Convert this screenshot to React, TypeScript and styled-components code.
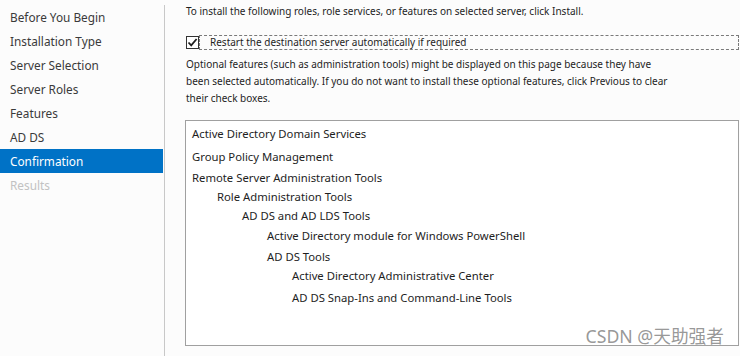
import React from 'react';
import styled, { createGlobalStyle } from 'styled-components';

const GlobalStyle = createGlobalStyle`
  html, body {
    margin: 0;
    padding: 0;
    background: #fcfcfc;
  }
  body {
    font-family: "Noto Sans", "Open Sans", sans-serif;
    font-size: 12px;
    color: #1e1e1e;
  }
`;

const steps = [
  { label: 'Before You Begin' },
  { label: 'Installation Type' },
  { label: 'Server Selection' },
  { label: 'Server Roles' },
  { label: 'Features' },
  { label: 'AD DS' },
  { label: 'Confirmation', active: true },
  { label: 'Results', disabled: true },
];

// h = distance to the next row
const features = [
  { text: 'Active Directory Domain Services', level: 0, h: 23 },
  { text: 'Group Policy Management', level: 0, h: 21 },
  { text: 'Remote Server Administration Tools', level: 0, h: 19 },
  { text: 'Role Administration Tools', level: 1, h: 19 },
  { text: 'AD DS and AD LDS Tools', level: 2, h: 20 },
  { text: 'Active Directory module for Windows PowerShell', level: 3, h: 21 },
  { text: 'AD DS Tools', level: 3, h: 19 },
  { text: 'Active Directory Administrative Center', level: 4, h: 22 },
  { text: 'AD DS Snap-Ins and Command-Line Tools', level: 4, h: 22 },
];

export default function App() {
  return (
    <>
      <GlobalStyle />
      <Page>
        <Sidebar>
          {steps.map((s) => (
            <Step key={s.label} $active={s.active} $disabled={s.disabled}>
              {s.label}
            </Step>
          ))}
        </Sidebar>
        <Content>
          <Intro>
            To install the following roles, role services, or features on selected server, click Install.
          </Intro>
          <CheckRow>
            <CheckBox>
              <svg width="11" height="11" viewBox="0 0 11 11">
                <path d="M1.5 5.5 L4.2 8.3 L9.6 2" fill="none" stroke="#1e1e1e" strokeWidth="1.8" />
              </svg>
            </CheckBox>
            <FocusLabel>Restart the destination server automatically if required</FocusLabel>
          </CheckRow>
          <Note>
            Optional features (such as administration tools) might be displayed on this page because they have
            <br />
            been selected automatically. If you do not want to install these optional features, click Previous to clear
            <br />
            their check boxes.
          </Note>
          <ListBox>
            {features.map((f) => (
              <FeatureRow key={f.text} $level={f.level} $h={f.h}>
                {f.text}
              </FeatureRow>
            ))}
          </ListBox>
        </Content>
        <Watermark>CSDN @天助强者</Watermark>
      </Page>
    </>
  );
}

const Page = styled.div`
  position: relative;
  display: flex;
  width: 740px;
  height: 356px;
  overflow: hidden;
  background: #fcfcfc;
`;

const Sidebar = styled.nav`
  width: 164px;
  flex-shrink: 0;
  padding-top: 5px;
  display: flex;
  flex-direction: column;
  position: relative;
  &::after {
    content: '';
    position: absolute;
    right: -1px;
    top: 5px;
    bottom: 0;
    width: 1px;
    background: #c8c8c8;
  }
`;

const Step = styled.div<{ $active?: boolean; $disabled?: boolean }>`
  height: 24px;
  line-height: 25px;
  padding-left: 10px;
  margin-right: 1px;
  font-size: 11.8px;
  color: ${(p) => (p.$active ? '#ffffff' : p.$disabled ? '#c2c2c2' : '#3a3a3a')};
  background: ${(p) => (p.$active ? '#0072c6' : 'transparent')};
`;

const Content = styled.main`
  flex: 1;
  padding: 3px 7px 0 22px;
  display: flex;
  flex-direction: column;
  font-size: 10px;
`;

const Intro = styled.p`
  margin: 0;
  line-height: 17px;
  white-space: nowrap;
`;

const CheckRow = styled.div`
  display: flex;
  align-items: center;
  margin-top: 15px;
  height: 15px;
`;

const CheckBox = styled.span`
  width: 11px;
  height: 11px;
  border: 1px solid #333;
  background: #fff;
  display: flex;
  align-items: center;
  justify-content: center;
  flex-shrink: 0;
`;

const FocusLabel = styled.span`
  flex: 1;
  height: 13px;
  line-height: 13px;
  border: 1px dashed #7a7a7a;
  padding-left: 10px;
  white-space: nowrap;
`;

const Note = styled.p`
  margin: 6px 0 0;
  line-height: 17px;
  white-space: nowrap;
`;

const ListBox = styled.div`
  margin: 13px 0 0 -1px;
  height: 219px;
  width: 546px;
  border: 1px solid #a0a0a0;
  background: #ffffff;
  padding: 5px 0 0 6px;
  box-sizing: content-box;
  font-size: 11.3px;
`;

const FeatureRow = styled.div<{ $level: number; $h: number }>`
  height: ${(p) => p.$h}px;
  line-height: 16px;
  padding-left: ${(p) => p.$level * 25}px;
  white-space: nowrap;
`;

const Watermark = styled.div`
  position: absolute;
  right: 16px;
  bottom: 8px;
  font-size: 17.7px;
  color: rgba(125, 125, 125, 0.8);
  font-family: "Noto Sans", "Noto Sans CJK SC", sans-serif;
`;
